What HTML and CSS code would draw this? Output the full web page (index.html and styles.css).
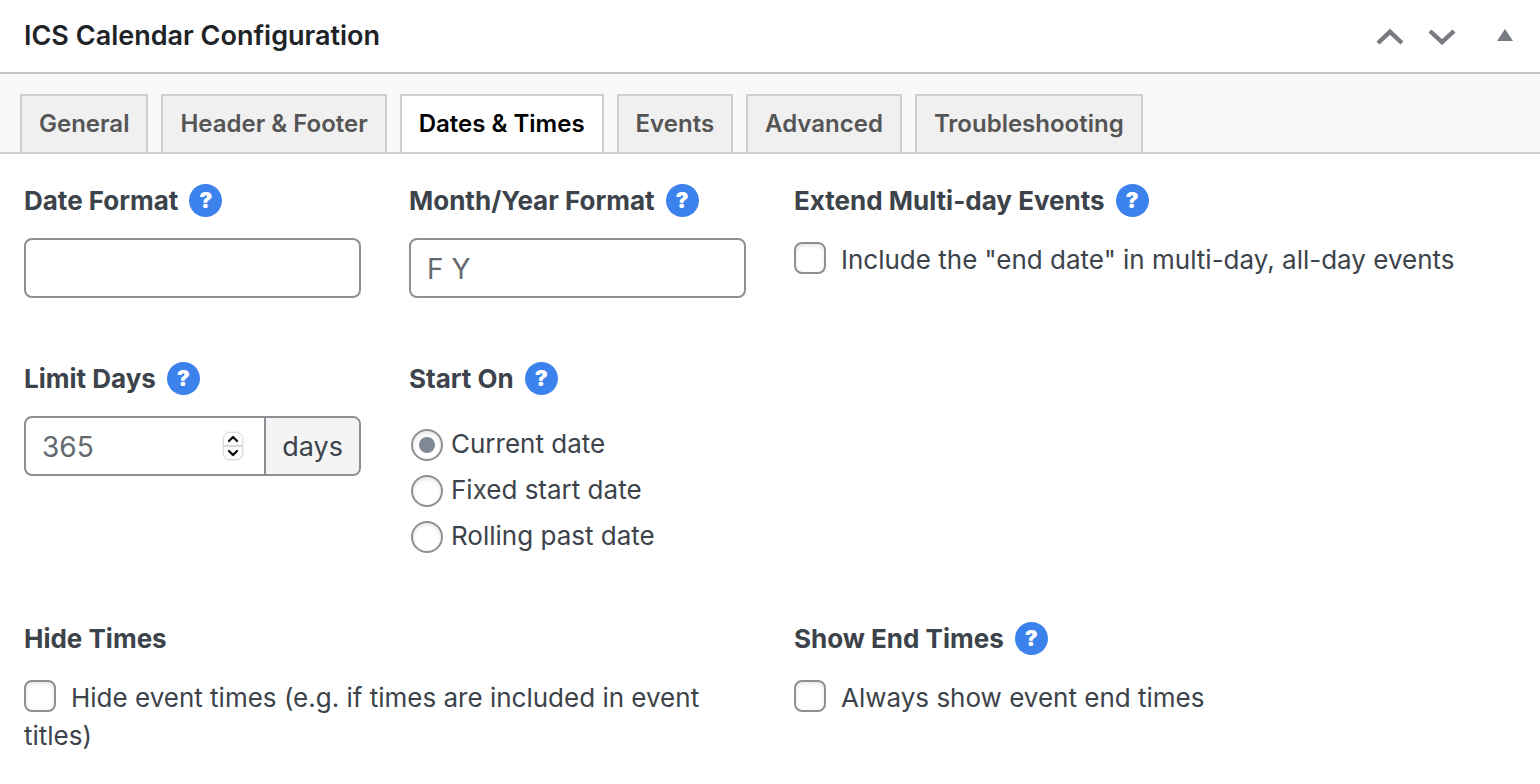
FILE: index.html
```html
<!DOCTYPE html>
<html lang="en">
<head>
<meta charset="utf-8">
<meta name="viewport" content="width=device-width, initial-scale=1">
<title>ICS Calendar Configuration</title>
<link rel="stylesheet" href="styles.css">
</head>
<body>
<section class="panel">
  <header class="panel-header">
    <h2 class="panel-title">ICS Calendar Configuration</h2>
    <div class="panel-actions">
      <button type="button" class="icon-button" aria-label="Move up">
        <svg width="28" height="18" viewBox="0 0 28 18"><path d="M2 16 L14 4.8 L26 16" fill="none" stroke="currentColor" stroke-width="4.4"/></svg>
      </button>
      <button type="button" class="icon-button" aria-label="Move down">
        <svg width="28" height="18" viewBox="0 0 28 18"><path d="M2 4 L14 15.2 L26 4" fill="none" stroke="currentColor" stroke-width="4.4"/></svg>
      </button>
      <button type="button" class="icon-button icon-toggle" aria-label="Toggle panel">
        <svg width="16" height="16" viewBox="0 0 16 16"><path d="M8 1 L16 13 H0 Z" fill="currentColor"/></svg>
      </button>
    </div>
  </header>

  <nav class="tabs" role="tablist">
    <button type="button" class="tab" role="tab">General</button>
    <button type="button" class="tab" role="tab">Header &amp; Footer</button>
    <button type="button" class="tab tab-active" role="tab" aria-selected="true">Dates &amp; Times</button>
    <button type="button" class="tab" role="tab">Events</button>
    <button type="button" class="tab" role="tab">Advanced</button>
    <button type="button" class="tab" role="tab">Troubleshooting</button>
  </nav>

  <form class="settings">
    <div class="field">
      <div class="field-head">
        <label class="field-label" for="date-format">Date Format</label>
        <button type="button" class="help">?</button>
      </div>
      <input class="text-input" type="text" id="date-format">
    </div>

    <div class="field">
      <div class="field-head">
        <label class="field-label" for="month-format">Month/Year Format</label>
        <button type="button" class="help">?</button>
      </div>
      <input class="text-input" type="text" id="month-format" placeholder="F Y">
    </div>

    <div class="field field-wide">
      <div class="field-head">
        <span class="field-label">Extend Multi-day Events</span>
        <button type="button" class="help">?</button>
      </div>
      <label class="check-label" for="extend"><input class="check" type="checkbox" id="extend">Include the "end date" in multi-day, all-day events</label>
    </div>

    <div class="field">
      <div class="field-head">
        <label class="field-label" for="limit-days">Limit Days</label>
        <button type="button" class="help">?</button>
      </div>
      <div class="input-group">
        <input class="number-input" type="number" id="limit-days" placeholder="365">
        <span class="stepper">
          <button type="button" class="step" aria-label="Increase"><svg width="12" height="8" viewBox="0 0 12 8"><path d="M2 6 L6 2 L10 6" fill="none" stroke="currentColor" stroke-width="2.4" stroke-linecap="round" stroke-linejoin="round"/></svg></button>
          <button type="button" class="step" aria-label="Decrease"><svg width="12" height="8" viewBox="0 0 12 8"><path d="M2 2 L6 6 L10 2" fill="none" stroke="currentColor" stroke-width="2.4" stroke-linecap="round" stroke-linejoin="round"/></svg></button>
        </span>
        <span class="addon">days</span>
      </div>
    </div>

    <div class="field field-rest" role="radiogroup" aria-labelledby="start-on">
      <div class="field-head">
        <span class="field-label" id="start-on">Start On</span>
        <button type="button" class="help">?</button>
      </div>
      <div class="radio-list">
        <label class="radio-label" for="start-current"><input class="radio" type="radio" name="start" id="start-current" checked>Current date</label>
        <label class="radio-label" for="start-fixed"><input class="radio" type="radio" name="start" id="start-fixed">Fixed start date</label>
        <label class="radio-label" for="start-rolling"><input class="radio" type="radio" name="start" id="start-rolling">Rolling past date</label>
      </div>
    </div>

    <div class="field field-wide">
      <div class="field-head">
        <span class="field-label">Hide Times</span>
      </div>
      <label class="check-label" for="hide-times"><input class="check" type="checkbox" id="hide-times">Hide event times (e.g. if times are included in event titles)</label>
    </div>

    <div class="field field-wide">
      <div class="field-head">
        <span class="field-label">Show End Times</span>
        <button type="button" class="help">?</button>
      </div>
      <label class="check-label" for="show-end"><input class="check" type="checkbox" id="show-end">Always show event end times</label>
    </div>
  </form>
</section>
</body>
</html>
```
FILE: styles.css
```css
* { box-sizing: border-box; }

body {
  margin: 0;
  background: #fff;
  color: #3c434a;
  font: 26px/38px Inter, "Liberation Sans", sans-serif;
}

button, input { font-family: inherit; margin: 0; }

.panel-header {
  display: flex;
  align-items: center;
  justify-content: space-between;
  min-height: 74px;
  padding: 0 27px 0 24px;
  border-bottom: 2px solid #c3c4c7;
}

.panel-title {
  margin: 0;
  color: #1d2327;
  font-size: 27px;
  font-weight: 600;
}

.panel-actions { display: flex; align-items: center; gap: 24px; }

.icon-button {
  display: flex;
  padding: 0;
  border: 0;
  background: none;
  color: #787c82;
}

.icon-toggle { margin-left: 17px; }

.tabs {
  display: flex;
  gap: 13px;
  padding: 20px 20px 0;
  background: #f9f9f9;
  border-bottom: 2px solid #ccd0d4;
}

.tab {
  padding: 10px 17px;
  border: 2px solid #ccd0d4;
  border-bottom: 0;
  background: #f0f0f0;
  color: #555;
  font-size: 24px;
  font-weight: 600;
  line-height: 36px;
  height: 58px;
}

.tab-active { background: #fff; color: #000; }

.settings {
  display: grid;
  grid-template-columns: repeat(4, minmax(0, 1fr));
  gap: 62px 48px;
  padding: 28px 24px;
}

.field-wide { grid-column: span 2; }
.field-rest { grid-column: span 3; }

.field-head {
  display: flex;
  align-items: center;
  gap: 11px;
  height: 37px;
  margin-bottom: 19px;
}

.field-label { font-weight: 700; }

.help {
  width: 33px;
  height: 33px;
  padding: 0;
  border: 0;
  border-radius: 50%;
  background: #3c82ec;
  color: #fff;
  font-size: 22px;
  font-weight: 900;
  line-height: 33px;
}

.text-input, .input-group {
  display: flex;
  width: 100%;
  height: 60px;
  border: 2px solid #8c8f94;
  border-radius: 8px;
  background: #fff;
  color: #3c434a;
}

.text-input { padding: 2px 16px 0; font-size: 28px; }

.input-group { overflow: hidden; align-items: stretch; }

.number-input {
  flex: 1;
  min-width: 0;
  padding: 2px 16px 0;
  border: 0;
  background: none;
  font-size: 28px;
  appearance: textfield;
}

.number-input::-webkit-inner-spin-button { appearance: none; }

.text-input::placeholder, .number-input::placeholder { color: #646970; }

.stepper {
  display: flex;
  flex-direction: column;
  align-self: center;
  width: 18px;
  height: 26px;
  margin-right: 22px;
  border-radius: 6px;
  box-shadow: 0 0 2px 1px #d0d0d0;
  overflow: hidden;
}

.step {
  display: flex;
  flex: 1;
  align-items: center;
  justify-content: center;
  padding: 0;
  border: 0;
  background: #fff;
  color: #111;
}

.step + .step { border-top: 2px solid #d8d8d8; }

.addon {
  padding: 0 16px;
  border-left: 2px solid #8c8f94;
  background: #f4f4f4;
  font-size: 27px;
  line-height: 57px;
}

.check, .radio {
  appearance: none;
  width: 32px;
  height: 32px;
  border: 2px solid #8c8f94;
  background: #fff;
  box-shadow: inset 0 2px 4px rgba(0, 0, 0, 0.1);
}

.check-label { display: block; padding-top: 3px; }

.check {
  margin: 0 15px 0 0;
  border-radius: 8px;
  vertical-align: -5px;
}

.radio-list {
  display: flex;
  flex-direction: column;
  gap: 8px;
  padding: 9px 0 3px 2px;
}

.radio-label { display: flex; align-items: center; gap: 8px; }

.radio { display: grid; place-items: center; margin-top: 2px; border-radius: 50%; }

.radio:checked::before {
  content: "";
  width: 16px;
  height: 16px;
  border-radius: 50%;
  background: #7e8993;
}
```
